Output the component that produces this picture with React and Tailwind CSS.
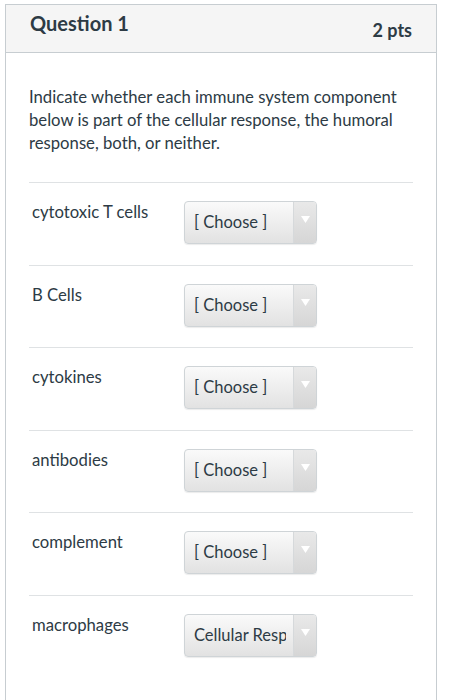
const rows = [
  { label: "cytotoxic T cells", value: "[ Choose ]" },
  { label: "B Cells", value: "[ Choose ]" },
  { label: "cytokines", value: "[ Choose ]" },
  { label: "antibodies", value: "[ Choose ]" },
  { label: "complement", value: "[ Choose ]" },
  { label: "macrophages", value: "Cellular Response" },
];

function Select({ value }) {
  return (
    <div className="flex h-[43px] w-[133px] overflow-hidden rounded-[4px] border border-[#cfd4d7] bg-gradient-to-b from-[#fafafa] to-[#e2e2e2] shadow-[0_1px_1px_rgba(0,0,0,0.08)]">
      <div className="mr-[7px] flex-1 overflow-hidden whitespace-nowrap pl-[9px] pt-[10px] text-[16.5px] leading-[20px] text-[#2d3b45]">
        {value}
      </div>
      <div className="flex w-[23px] items-center justify-center border-l border-[#d6d9db] bg-gradient-to-b from-[#e9e9e9] to-[#d6d6d6]">
        <svg width="9" height="7" viewBox="0 0 9 7" className="-mt-[6px]">
          <path d="M0 0h9L4.5 7z" fill="#ffffff" />
        </svg>
      </div>
    </div>
  );
}

export default function App() {
  return (
    <div className="min-h-[700px] bg-white pl-[5px] pt-[4px] font-['Lato','Noto_Sans',sans-serif] text-[#2d3b45]">
      <div className="w-[432px] min-h-[700px] border border-b-0 border-[#c7cdd1]">
        {/* header */}
        <div className="flex h-[48px] items-start justify-between border-b border-[#c7cdd1] bg-[#f5f5f5] px-[24px]">
          <h2 className="pt-[5px] text-[20px] font-bold leading-[26px]">Question 1</h2>
          <span className="pt-[14px] text-[18px] font-bold leading-[22px]">2 pts</span>
        </div>

        {/* body */}
        <div className="px-[23px] pt-[33px]">
          <p className="pb-[27px] text-[16.7px] leading-[23px]">
            Indicate whether each immune system component below is part of the cellular response, the humoral
            response, both, or neither.
          </p>

          {rows.map((r) => (
            <div key={r.label} className="flex items-start border-t border-[#dfe2e4] pb-[20.5px] pt-[18px]">
              <div className="w-[155px] pl-[3px] text-[16.7px] leading-[22px]">{r.label}</div>
              <Select value={r.value} />
            </div>
          ))}
        </div>
      </div>
    </div>
  );
}
